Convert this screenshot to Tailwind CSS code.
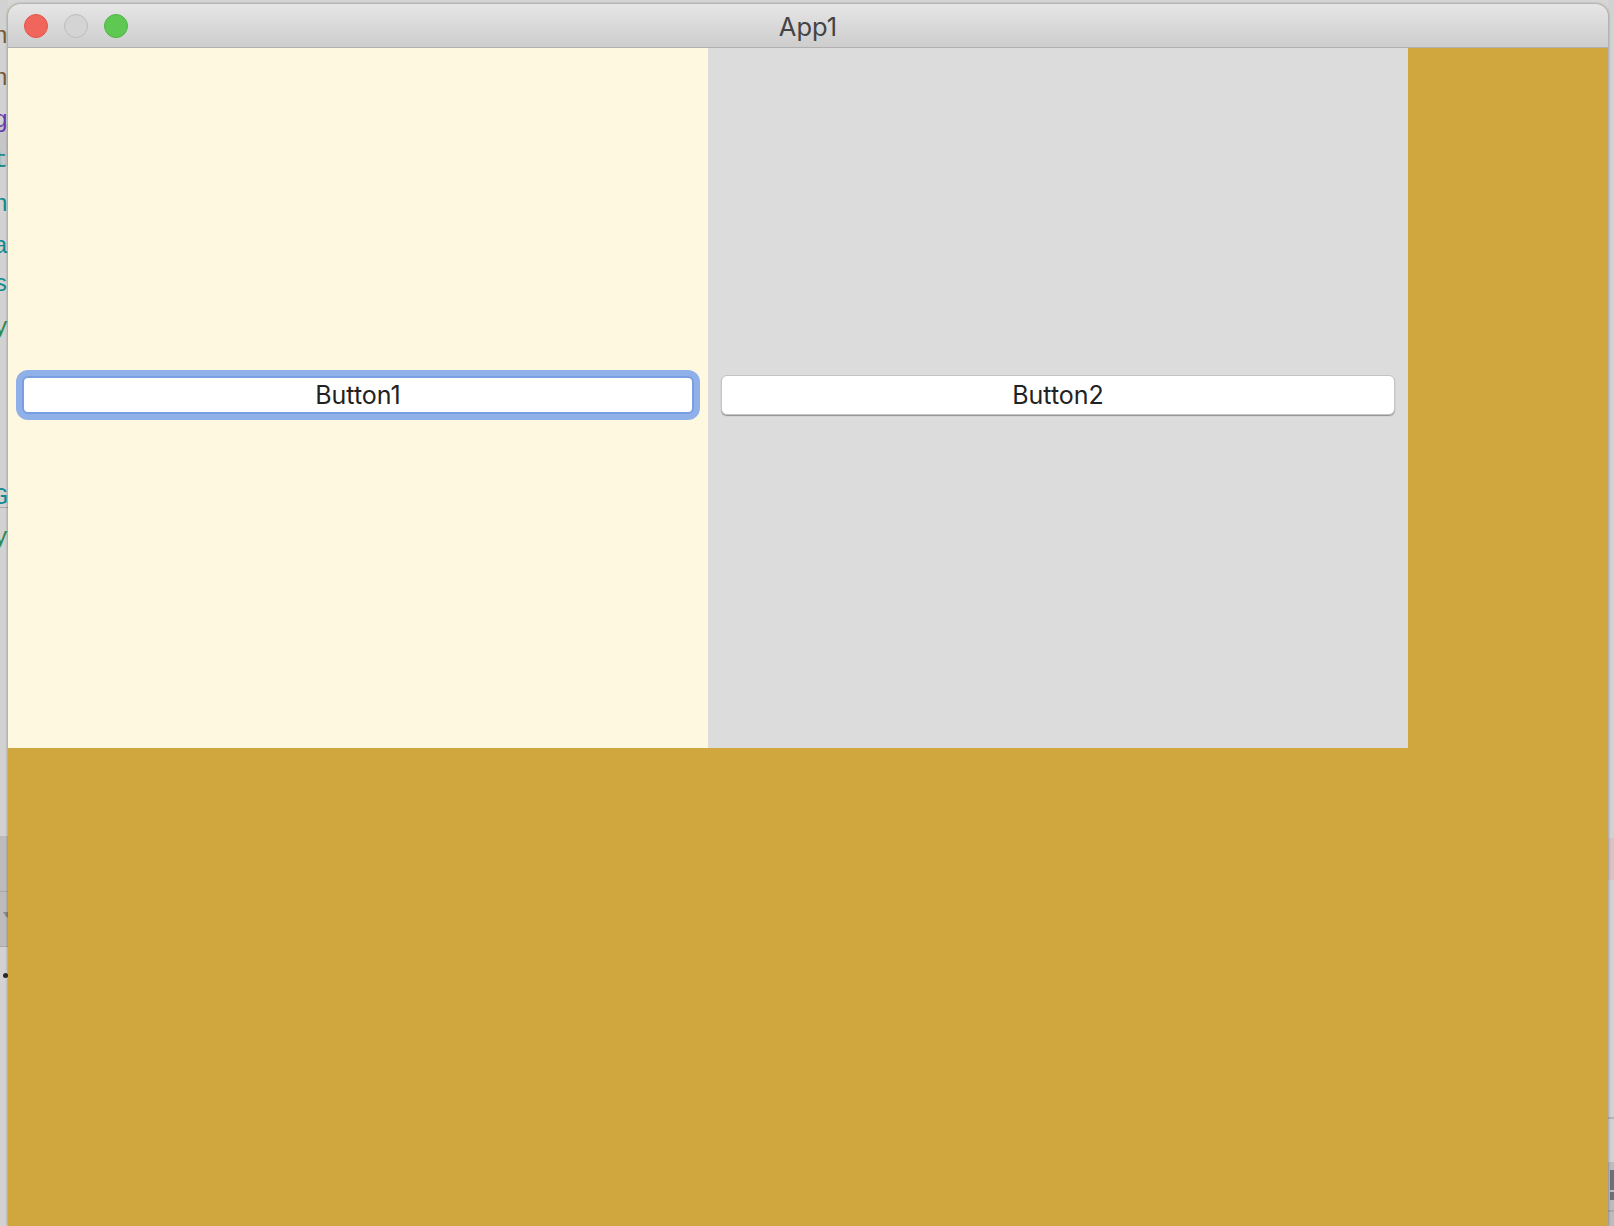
<!DOCTYPE html>
<html lang="en">
<head>
  <meta charset="UTF-8" />
  <title>App1</title>
  <script src="https://cdn.jsdelivr.net/npm/@tailwindcss/browser@4"></script>
</head>
<body class="relative w-[1614px] h-[1226px] overflow-hidden bg-[#d6d6d6] font-['Inter','Liberation_Sans',sans-serif]">

  <!-- desktop behind the window: left edge of another window -->
  <div class="absolute left-0 top-0 w-[8px] h-[1226px] overflow-hidden bg-[#d2d2d2]">
    <div class="absolute left-0 top-[124px] w-full h-[42px] bg-[#c6c6c6]"></div>
    <div class="absolute left-0 top-[836px] w-full h-[110px] bg-[#bcbcbc]"></div>
    <div class="absolute left-0 top-[891px] w-full h-px bg-[#a8a8a8]"></div>
    <div class="absolute left-0 top-[946px] w-full h-px bg-[#a8a8a8]"></div>
    <div class="absolute left-0 top-[507px] w-full h-px bg-[#a8a8a8]"></div>
    <div class="absolute left-[3px] top-[973px] w-[5px] h-[5px] rounded-full bg-[#2b2b2b]"></div>
    <div class="absolute left-[3px] top-[912px] border-l-[4px] border-r-[4px] border-t-[6px] border-l-transparent border-r-transparent border-t-[#8a8a8a]"></div>
    <div class="absolute right-[0px] top-[22px] text-[24px] leading-[30px] text-[#7a5a30] font-['Liberation_Mono',monospace]">n</div>
    <div class="absolute right-[0px] top-[64px] text-[24px] leading-[30px] text-[#7a5a30] font-['Liberation_Mono',monospace]">n</div>
    <div class="absolute right-[0px] top-[106px] text-[24px] leading-[30px] text-[#6a35b0] font-['Liberation_Mono',monospace]">g</div>
    <div class="absolute right-[0px] top-[146px] text-[24px] leading-[30px] text-[#1f8a8a] font-['Liberation_Mono',monospace]">t</div>
    <div class="absolute right-[0px] top-[190px] text-[24px] leading-[30px] text-[#108a90] font-['Liberation_Mono',monospace]">n</div>
    <div class="absolute right-[0px] top-[232px] text-[24px] leading-[30px] text-[#108a90] font-['Liberation_Mono',monospace]">a</div>
    <div class="absolute right-[0px] top-[270px] text-[24px] leading-[30px] text-[#108a90] font-['Liberation_Mono',monospace]">s</div>
    <div class="absolute right-[0px] top-[313px] text-[24px] leading-[30px] text-[#2f8a50] font-['Liberation_Mono',monospace]">y</div>
    <div class="absolute right-[0px] top-[483px] text-[24px] leading-[30px] text-[#108a90] font-['Liberation_Mono',monospace]">G</div>
    <div class="absolute right-[0px] top-[523px] text-[24px] leading-[30px] text-[#2f8a50] font-['Liberation_Mono',monospace]">y</div>
  </div>
  <div class="absolute right-0 top-0 w-[6px] h-[1226px] overflow-hidden bg-[#d2d2d2]">
    <div class="absolute left-0 top-[838px] w-full h-[42px] bg-[#d8c4c4]"></div>
    <div class="absolute left-0 top-[1117px] w-full h-[2px] bg-[#b4b4b4]"></div>
    <div class="absolute left-0 top-[1162px] w-full h-[64px] bg-[#bcbcbc]"></div>
    <div class="absolute left-[2px] top-[1170px] w-[4px] h-[20px] bg-[#6e6e78]"></div>
    <div class="absolute left-[2px] top-[1192px] w-[4px] h-[8px] bg-[#6e6e78]"></div>
    <div class="absolute left-0 top-[1210px] w-full h-[2px] bg-[#a8a8a8]"></div>
  </div>

  <!-- app window -->
  <div class="absolute left-[8px] top-[4px] w-[1600px] h-[1222px] flex flex-col rounded-t-[12px] overflow-hidden bg-[#d0a63f] shadow-[0_0_3px_rgba(0,0,0,0.45)]">
    <div class="relative h-[44px] shrink-0 flex items-center justify-center bg-gradient-to-b from-[#e6e6e6] to-[#cdcdcd] border-b border-[#b0b0b0]">
      <div class="absolute left-[16px] top-[10px] flex gap-[16px]">
        <div class="w-[24px] h-[24px] rounded-full bg-[#f0665c] border border-[#e0554c]"></div>
        <div class="w-[24px] h-[24px] rounded-full bg-[#d4d4d4] border border-[#bcbcbc]"></div>
        <div class="w-[24px] h-[24px] rounded-full bg-[#5fc853] border border-[#4fb544]"></div>
      </div>
      <span class="text-[25.5px] leading-none text-[#444444] mt-[2px]">App1</span>
    </div>
    <div class="flex">
      <div class="w-[700px] h-[700px] bg-[#fff8e1] flex items-center px-[14px]">
        <button class="w-full h-[38px] mt-[-6px] rounded-[6px] bg-white text-[25px] leading-none text-[#222222] ring-[6px] ring-[#8fb0e8] border-2 border-[#7a9fe0]">Button1</button>
      </div>
      <div class="w-[700px] h-[700px] bg-[#dcdcdc] flex items-center px-[13px]">
        <button class="w-full h-[40px] mt-[-6px] pt-[1px] rounded-[6px] bg-white text-[25px] leading-none text-[#222222] border border-[#c4c4c4] shadow-[0_1px_1px_rgba(0,0,0,0.35)]">Button2</button>
      </div>
    </div>
  </div>
</body>
</html>
